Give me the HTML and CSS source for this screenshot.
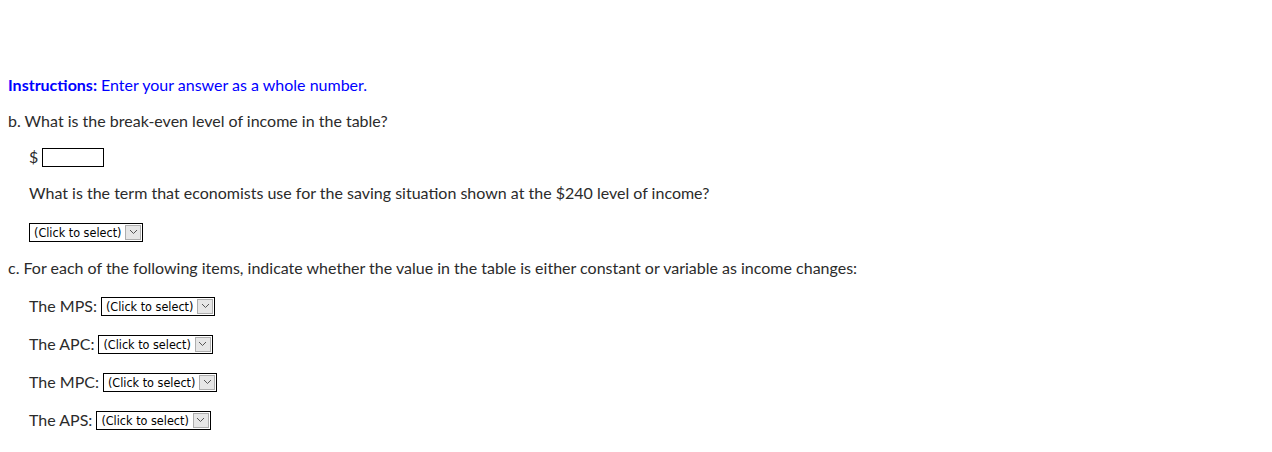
FILE: index.html
```html
<!DOCTYPE html>
<html>
<head>
<meta charset="utf-8">
<link rel="stylesheet" href="styles.css">
</head>
<body>
<div class="page">
  <div class="row r1"><span class="instr-label">Instructions:</span> <span class="instr">Enter your answer as a whole number.</span></div>
  <div class="row r2">b. What is the break-even level of income in the table?</div>
  <div class="row r3 indent"><span class="dollar">$</span><span class="input"></span></div>
  <div class="row r4 indent">What is the term that economists use for the saving situation shown at the $240 level of income?</div>
  <div class="row r5 indent"><span class="select"><span class="sel-text">(Click to select)</span><span class="sel-arrow"><svg width="9" height="6" viewBox="0 0 9 6"><path d="M1 1 L4.5 4.5 L8 1" fill="none" stroke="#555" stroke-width="1"/></svg></span></span></div>
  <div class="row r6">c. For each of the following items, indicate whether the value in the table is either constant or variable as income changes:</div>
  <div class="row r7 indent">The MPS:<span class="select"><span class="sel-text">(Click to select)</span><span class="sel-arrow"><svg width="9" height="6" viewBox="0 0 9 6"><path d="M1 1 L4.5 4.5 L8 1" fill="none" stroke="#555" stroke-width="1"/></svg></span></span></div>
  <div class="row r8 indent">The APC:<span class="select"><span class="sel-text">(Click to select)</span><span class="sel-arrow"><svg width="9" height="6" viewBox="0 0 9 6"><path d="M1 1 L4.5 4.5 L8 1" fill="none" stroke="#555" stroke-width="1"/></svg></span></span></div>
  <div class="row r8 indent">The MPC:<span class="select"><span class="sel-text">(Click to select)</span><span class="sel-arrow"><svg width="9" height="6" viewBox="0 0 9 6"><path d="M1 1 L4.5 4.5 L8 1" fill="none" stroke="#555" stroke-width="1"/></svg></span></span></div>
  <div class="row r8 indent">The APS:<span class="select"><span class="sel-text">(Click to select)</span><span class="sel-arrow"><svg width="9" height="6" viewBox="0 0 9 6"><path d="M1 1 L4.5 4.5 L8 1" fill="none" stroke="#555" stroke-width="1"/></svg></span></span></div>
</div>
</body>
</html>
```

FILE: styles.css
```css
html, body {
  margin: 0;
  padding: 0;
  background: #fff;
}
.page {
  padding: 75px 0 0 8px;
  display: flex;
  flex-direction: column;
  font-family: Lato, "Open Sans", sans-serif;
  font-size: 16px;
  color: #2b2b2b;
}
.row {
  height: 20px;
  line-height: 20px;
  display: flex;
  align-items: center;
  white-space: nowrap;
}
.r2, .r3, .r4, .r6 { margin-top: 16px; }
.r5 { margin-top: 19px; }
.r7, .r8 { margin-top: 18px; }
.indent { padding-left: 21px; }
.instr-label {
  color: #0000ff;
  font-weight: 700;
  margin-right: 4px;
}
.instr { color: #0000ff; }
.dollar { margin-right: 4px; }
.input {
  display: inline-block;
  width: 60px;
  height: 17px;
  border: 1px solid #000;
  background: #fff;
}
.select {
  display: inline-flex;
  align-items: stretch;
  height: 17px;
  border: 1px solid #000;
  background: #fff;
  margin-left: 4px;
  font-family: "DejaVu Sans Condensed", "DejaVu Sans", sans-serif;
  font-size: 12.5px;
  color: #000;
}
.r5 .select { margin-left: 0; }
.sel-text {
  padding: 0 4px 0 4px;
  line-height: 17px;
}
.sel-arrow {
  width: 16px;
  background: #e6e6e6;
  border: 1px solid #adadad;
  box-sizing: border-box;
  margin: 1px 1px 1px 0;
  display: flex;
  align-items: center;
  justify-content: center;
}
```
